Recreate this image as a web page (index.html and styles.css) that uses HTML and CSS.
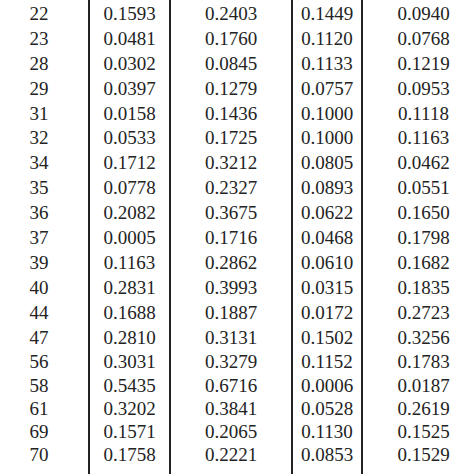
FILE: index.html
```html
<!DOCTYPE html>
<html>
<head>
<meta charset="utf-8">
<link rel="stylesheet" href="styles.css">
</head>
<body>
<div class="table">
  <div class="col c1">
    <div>22</div><div>23</div><div>28</div><div>29</div><div>31</div><div>32</div><div>34</div><div>35</div><div>36</div><div>37</div><div>39</div><div>40</div><div>44</div><div>47</div><div>56</div><div>58</div><div>61</div><div>69</div><div>70</div>
  </div>
  <div class="col c2">
    <div>0.1593</div><div>0.0481</div><div>0.0302</div><div>0.0397</div><div>0.0158</div><div>0.0533</div><div>0.1712</div><div>0.0778</div><div>0.2082</div><div>0.0005</div><div>0.1163</div><div>0.2831</div><div>0.1688</div><div>0.2810</div><div>0.3031</div><div>0.5435</div><div>0.3202</div><div>0.1571</div><div>0.1758</div>
  </div>
  <div class="col c3">
    <div>0.2403</div><div>0.1760</div><div>0.0845</div><div>0.1279</div><div>0.1436</div><div>0.1725</div><div>0.3212</div><div>0.2327</div><div>0.3675</div><div>0.1716</div><div>0.2862</div><div>0.3993</div><div>0.1887</div><div>0.3131</div><div>0.3279</div><div>0.6716</div><div>0.3841</div><div>0.2065</div><div>0.2221</div>
  </div>
  <div class="col c4">
    <div>0.1449</div><div>0.1120</div><div>0.1133</div><div>0.0757</div><div>0.1000</div><div>0.1000</div><div>0.0805</div><div>0.0893</div><div>0.0622</div><div>0.0468</div><div>0.0610</div><div>0.0315</div><div>0.0172</div><div>0.1502</div><div>0.1152</div><div>0.0006</div><div>0.0528</div><div>0.1130</div><div>0.0853</div>
  </div>
  <div class="col c5">
    <div>0.0940</div><div>0.0768</div><div>0.1219</div><div>0.0953</div><div>0.1118</div><div>0.1163</div><div>0.0462</div><div>0.0551</div><div>0.1650</div><div>0.1798</div><div>0.1682</div><div>0.1835</div><div>0.2723</div><div>0.3256</div><div>0.1783</div><div>0.0187</div><div>0.2619</div><div>0.1525</div><div>0.1529</div>
  </div>
</div>
</body>
</html>
```

FILE: styles.css
```css
html, body {
  margin: 0;
  padding: 0;
  background: #ffffff;
}
.table {
  display: flex;
  width: 474px;
  height: 474px;
  overflow: hidden;
  font-family: "Liberation Serif", "Times New Roman", serif;
  font-size: 19px;
  color: #232323;
}
.col {
  display: flex;
  flex-direction: column;
  padding-top: 2px;
  text-align: center;
  box-sizing: border-box;
  height: 474px;
}
.col div {
  flex: none;
  height: 24.9px;
  line-height: 24.9px;
}
.col div:nth-child(n+15) {
  height: 23.1px;
  line-height: 23.1px;
}
.c1 {
  width: 88px;
  padding-right: 10px;
}
.c2 {
  width: 83px;
  border-left: 2px solid #222;
  border-right: 2px solid #222;
}
.c3 {
  width: 120px;
}
.c4 {
  width: 72px;
  border-left: 2px solid #222;
  border-right: 2px solid #222;
}
.c5 {
  width: 111px;
  padding-left: 10px;
}
```
